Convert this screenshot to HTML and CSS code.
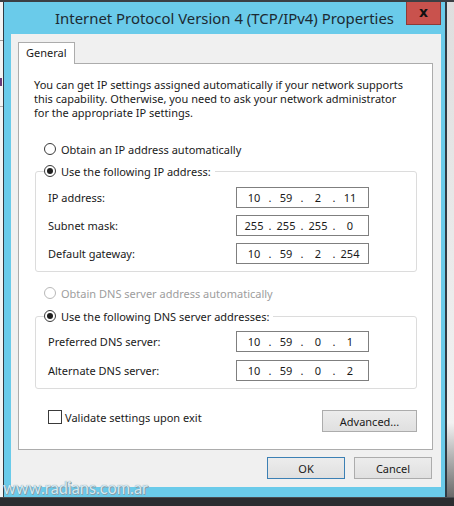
FILE: index.html
```html
<!DOCTYPE html>
<html>
<head>
<meta charset="utf-8">
<link rel="stylesheet" href="styles.css">
</head>
<body>
<div class="screen">
  <div class="top-band"></div>
  <div class="middle">
    <div class="left-strip"><span class="mark m1"></span><span class="mark m2"></span><span class="mark m3"></span></div>
    <div class="window">
      <div class="titlebar">
        <span class="title">Internet Protocol Version 4 (TCP/IPv4) Properties</span>
        <div class="close"><span>x</span></div>
      </div>
      <div class="client">
        <div class="tabs"><div class="tab">General</div></div>
        <div class="panel">
          <p class="desc">You can get IP settings assigned automatically if your network supports this capability. Otherwise, you need to ask your network administrator for the appropriate IP settings.</p>

          <div class="opt opt-first"><span class="radio"></span><span>Obtain an IP address automatically</span></div>

          <fieldset class="group group-ip">
            <legend class="opt legend"><span class="radio checked"></span><span>Use the following IP address:</span></legend>
            <div class="field-row">
              <span class="label">IP address:</span>
              <div class="ipbox"><span class="oct">10</span><span class="dot">.</span><span class="oct">59</span><span class="dot">.</span><span class="oct">2</span><span class="dot">.</span><span class="oct">11</span></div>
            </div>
            <div class="field-row">
              <span class="label">Subnet mask:</span>
              <div class="ipbox"><span class="oct">255</span><span class="dot">.</span><span class="oct">255</span><span class="dot">.</span><span class="oct">255</span><span class="dot">.</span><span class="oct">0</span></div>
            </div>
            <div class="field-row">
              <span class="label">Default gateway:</span>
              <div class="ipbox"><span class="oct">10</span><span class="dot">.</span><span class="oct">59</span><span class="dot">.</span><span class="oct">2</span><span class="dot">.</span><span class="oct">254</span></div>
            </div>
          </fieldset>

          <div class="opt opt-dns disabled"><span class="radio"></span><span>Obtain DNS server address automatically</span></div>

          <fieldset class="group group-dns">
            <legend class="opt legend"><span class="radio checked"></span><span>Use the following DNS server addresses:</span></legend>
            <div class="field-row">
              <span class="label">Preferred DNS server:</span>
              <div class="ipbox"><span class="oct">10</span><span class="dot">.</span><span class="oct">59</span><span class="dot">.</span><span class="oct">0</span><span class="dot">.</span><span class="oct">1</span></div>
            </div>
            <div class="field-row">
              <span class="label">Alternate DNS server:</span>
              <div class="ipbox"><span class="oct">10</span><span class="dot">.</span><span class="oct">59</span><span class="dot">.</span><span class="oct">0</span><span class="dot">.</span><span class="oct">2</span></div>
            </div>
          </fieldset>

          <div class="bottom-row">
            <div class="check-row"><span class="checkbox"></span><span>Validate settings upon exit</span></div>
            <div class="btn btn-adv">Advanced...</div>
          </div>
        </div>
        <div class="actions">
          <div class="btn btn-ok">OK</div>
          <div class="btn">Cancel</div>
        </div>
      </div>
    </div>
    <div class="right-strip"></div>
  </div>
  <div class="bottom-band"></div>
  <div class="watermark">www.radians.com.ar</div>
</div>
</body>
</html>
```
FILE: styles.css
```css
* { box-sizing: border-box; }
html, body { margin: 0; padding: 0; }
body {
  background: #f2f2f2;
  font-family: "Noto Sans", "Open Sans", sans-serif;
  font-size: 11px;
  color: #1a1a1a;
}
.screen {
  width: 454px;
  height: 506px;
  position: relative;
  display: flex;
  flex-direction: column;
  overflow: hidden;
}
.top-band { height: 2px; background: #3b3f44; flex: none; }
.bottom-band { height: 9px; background: #2b2d30; flex: none; border-top: 1px solid #4a4d52; }
.middle { display: flex; flex: none; height: 495px; }
.left-strip {
  width: 3px; background: #f4f4f4; position: relative; flex: none;
}
.mark { position: absolute; left: 0; width: 3px; }
.m1 { top: 38px; height: 1px; background: #9a9a9a; }
.m2 { top: 76px; height: 8px; background: #6a3a78; width: 2px; }
.m3 { top: 104px; height: 1px; background: #b0b0b0; }
.right-strip {
  width: 7px; flex: none;
  background: linear-gradient(#dedede 0, #f2f2f2 85%, #6a6a6a 100%);
}
.window {
  width: 444px;
  flex: none;
  background: #6acbea;
  border-left: 1px solid #2f3b44;
  border-right: 2px solid #2f3b44;
  padding: 0 4px 9px 7px;
  position: relative;
  display: flex;
  flex-direction: column;
}
.titlebar {
  height: 32px;
  display: flex;
  align-items: center;
  justify-content: center;
  margin-left: -7px;
  margin-right: -4px;
  padding-bottom: 1px;
}
.title {
  font-family: "Noto Sans", "Open Sans", sans-serif;
  font-size: 14.9px;
  color: #1c2a32;
  white-space: nowrap;
}
.close {
  position: absolute;
  top: 0;
  right: 4px;
  width: 35px;
  height: 23px;
  background: #c9524d;
  border: 1px solid #8e3a36;
  border-top: none;
  display: flex;
  align-items: center;
  justify-content: center;
}
.close span {
  font-family: "DejaVu Sans", sans-serif;
  font-weight: bold;
  font-size: 14px;
  line-height: 14px;
  color: #111;
  margin-top: -2px;
}
.client {
  background: #f0f0f0;
  height: 453px;
  padding: 8px 9px 0 7px;
  display: flex;
  flex-direction: column;
}
.tabs { display: flex; height: 22px; position: relative; z-index: 1; }
.tab {
  width: 57px;
  height: 22px;
  background: #fff;
  border: 1px solid #acacac;
  border-bottom: none;
  padding: 2px 0 0 7px;
  line-height: 15px;
}
.panel {
  margin-top: -1px;
  width: 415px;
  background: #fff;
  border: 1px solid #acacac;
  padding: 0 14px 17px 15px;
}
.desc {
  margin: 14px 0 0 0;
  line-height: 14px;
  width: 380px;
}
.opt {
  display: flex;
  align-items: center;
  height: 16px;
  white-space: nowrap;
}
.opt-first { margin: 21px 0 0 10px; }
.radio {
  width: 12px;
  height: 12px;
  border: 1px solid #3a3a3a;
  border-radius: 50%;
  background: #fff;
  margin-right: 5px;
  flex: none;
  display: flex;
  align-items: center;
  justify-content: center;
}
.radio.checked::after {
  content: "";
  width: 6px;
  height: 6px;
  border-radius: 50%;
  background: #1e1e1e;
}
.disabled { color: #9d9d9d; }
.disabled .radio { border-color: #b8b8b8; }
.group {
  margin: 6px 0 0 1px;
  width: 382px;
  border: 1px solid #dcdcdc;
  border-radius: 3px;
  padding: 0 0 7px 0;
}
.legend {
  margin-left: 8px;
  padding: 0 4px 0 0;
}
.field-row {
  display: grid;
  grid-template-columns: 188px 133px;
  align-items: center;
  height: 21px;
  margin: 7px 0 0 12px;
}
.group-ip .field-row:first-of-type { margin-top: 8px; }
.group-dns .field-row { margin-top: 8px; }
.group-dns .field-row:first-of-type { margin-top: 7px; }
.label { white-space: nowrap; }
.ipbox {
  height: 21px;
  border: 1px solid #7f7f7f;
  background: #fff;
  display: flex;
  align-items: center;
  padding-left: 5px;
}
.oct { width: 24px; text-align: center; }
.dot { width: 8px; text-align: center; }
.opt-dns { margin: 13px 0 0 10px; }
.group-dns { margin-top: 7px; }
.bottom-row {
  display: flex;
  justify-content: space-between;
  align-items: flex-start;
  margin: 21px 0 0 14px;
  width: 369px;
}
.check-row {
  display: flex;
  align-items: center;
  height: 14px;
}
.checkbox {
  width: 14px;
  height: 14px;
  border: 1px solid #3a3a3a;
  background: #fff;
  margin-right: 3px;
}
.btn {
  width: 78px;
  height: 22px;
  border: 1px solid #acacac;
  background: linear-gradient(#ececec, #e0e0e0);
  display: flex;
  align-items: center;
  justify-content: center;
}
.btn-adv { width: 95px; }
.btn-ok { border-color: #3c80b4; }
.actions {
  display: flex;
  justify-content: flex-end;
  gap: 9px;
  margin-top: 7px;
}
.watermark {
  position: absolute;
  left: 3px;
  top: 479px;
  font-family: Lato, "Liberation Sans", sans-serif;
  font-size: 16.3px;
  line-height: 18px;
  color: #d3e9f3;
  text-shadow: 0 0 1px #6f8792, 1px 1px 0 #8aa3ae;
  letter-spacing: 0;
  white-space: nowrap;
}
```
